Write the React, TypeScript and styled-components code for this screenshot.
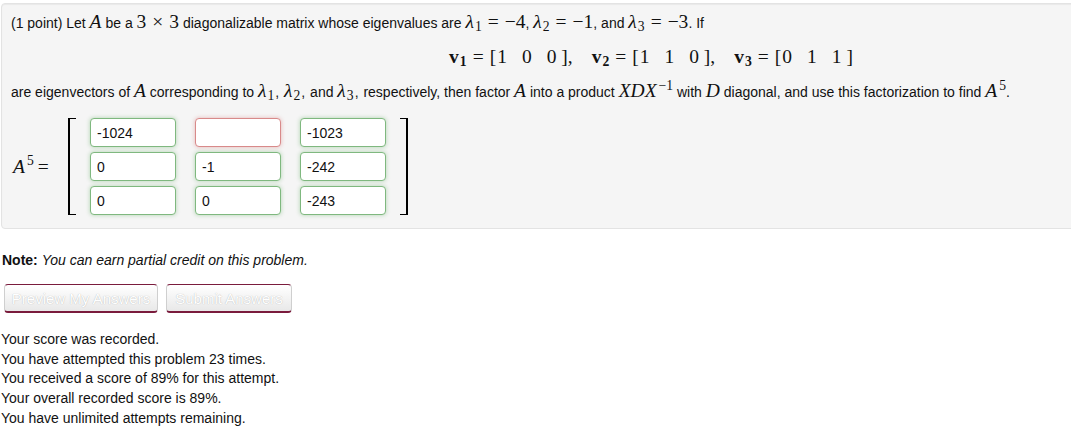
import React from "react";
import styled, { createGlobalStyle, css } from "styled-components";

const GlobalStyle = createGlobalStyle`
  html, body { margin: 0; padding: 0; background: #fff; overflow: hidden; }
  body { font-family: "Liberation Sans", Arial, sans-serif; font-size: 14px; color: #111; }
`;

const Page = styled.div`
  padding: 3px 0 0 1px;
  width: 1300px;
`;

const Panel = styled.div`
  box-sizing: border-box;
  width: 1300px;
  background: #f5f5f5;
  border: 1px solid #e3e3e3;
  border-radius: 4px;
  box-shadow: inset 0 1px 1px rgba(0, 0, 0, 0.05);
  padding: 8px 9px 13px 9px;
`;

const Para = styled.p<{ $top?: number }>`
  margin: ${(p) => p.$top ?? 0}px 0 0 0;
  height: 20px;
  line-height: 20px;
  white-space: nowrap;
`;

const Display = styled.div`
  margin-top: 15px;
  height: 22px;
  line-height: 22px;
  text-align: center;
  white-space: nowrap;
`;

const mathFont = css`
  font-family: "Liberation Serif", "Times New Roman", serif;
  font-size: 19.5px;
  line-height: 1;
`;

const Mi = styled.span`
  ${mathFont};
  font-style: italic;
`;

const Mn = styled.span`
  ${mathFont};
`;

const Mb = styled.span`
  ${mathFont};
  font-weight: bold;
`;

const Mo = styled.span<{ $gap?: number }>`
  ${mathFont};
  margin: 0 ${(p) => p.$gap ?? 6}px;
`;

const Sub = styled.span`
  font-size: 70%;
  line-height: 0;
  vertical-align: -0.25em;
  font-style: normal;
  margin-left: 1px;
`;

const Sup = styled.span`
  font-size: 70%;
  line-height: 0;
  vertical-align: 0.55em;
  font-style: normal;
  margin-left: 2px;
`;

const Entry = styled.span<{ $first?: boolean }>`
  ${mathFont};
  margin-left: ${(p) => (p.$first ? 1 : 15)}px;
`;

const Quad = styled.span`
  display: inline-block;
  width: 19px;
`;

const Comma = styled.span`
  margin-left: 1px;
  margin-right: 1px;
`;

const MatrixRow = styled.div`
  margin-top: 17px;
  display: flex;
  align-items: center;
`;

const Label = styled.div`
  ${mathFont};
  margin-left: 2px;
  width: 55px;
  white-space: nowrap;
`;

const Bracket = styled.div<{ $side: "left" | "right" }>`
  width: 6px;
  align-self: stretch;
  border: 0 solid #000;
  border-top-width: 1.5px;
  border-bottom-width: 1.5px;
  ${(p) => (p.$side === "left" ? "border-left-width: 2px;" : "border-right-width: 2px;")}
`;

const Grid = styled.div`
  display: grid;
  grid-template-columns: repeat(3, 86px);
  column-gap: 19px;
  row-gap: 5px;
  margin: 0 14px;
`;

const Cell = styled.input<{ $state: "ok" | "bad" }>`
  box-sizing: border-box;
  width: 86px;
  height: 29px;
  padding: 0 6px;
  font-family: "Liberation Sans", Arial, sans-serif;
  font-size: 14px;
  color: #111;
  background: #fff;
  border-radius: 4px;
  outline: none;
  border: 1px solid ${(p) => (p.$state === "ok" ? "#7fb87f" : "#d88a8a")};
  box-shadow: 0 0 4px
    ${(p) => (p.$state === "ok" ? "rgba(92, 170, 92, 0.45)" : "rgba(210, 90, 90, 0.4)")};
`;

const Note = styled.p`
  margin: 21px 0 0 1px;
  line-height: 20px;
`;

const NoteText = styled.i`
  font-style: italic;
`;

const Buttons = styled.div`
  margin: 14px 0 0 3px;
  display: flex;
  gap: 8px;
`;

const Button = styled.button<{ $w: number }>`
  box-sizing: border-box;
  width: ${(p) => p.$w}px;
  height: 29px;
  font-family: "Liberation Sans", Arial, sans-serif;
  font-size: 15px;
  color: #ffffff;
  text-shadow: 0 0 1px rgba(0, 0, 0, 0.3);
  background: linear-gradient(#ffffff, #e8e8e8);
  border: 1px solid #cfcfcf;
  border-top: 1px solid #7a1b3c;
  border-bottom: 2px solid #7a1b3c;
  border-radius: 4px;
  padding: 0;
`;

const Scores = styled.div`
  margin: 17px 0 0 0;
`;

const ScoreLine = styled.div`
  line-height: 19.7px;
`;

const cells: { v: string; s: "ok" | "bad" }[] = [
  { v: "-1024", s: "ok" },
  { v: "", s: "bad" },
  { v: "-1023", s: "ok" },
  { v: "0", s: "ok" },
  { v: "-1", s: "ok" },
  { v: "-242", s: "ok" },
  { v: "0", s: "ok" },
  { v: "0", s: "ok" },
  { v: "-243", s: "ok" },
];

const Vec = ({ n, e }: { n: string; e: string[] }) => (
  <>
    <Mb>
      v<Sub>{n}</Sub>
    </Mb>
    <Mo>=</Mo>
    <Mn>[</Mn>
    {e.map((x, i) => (
      <Entry key={i} $first={i === 0}>
        {x}
      </Entry>
    ))}
    <Mn>&nbsp;]</Mn>
  </>
);

const Lam = ({ n }: { n: string }) => (
  <Mi>
    λ<Sub>{n}</Sub>
  </Mi>
);

export default function App() {
  return (
    <>
      <GlobalStyle />
      <Page>
        <Panel>
          <Para $top={0}>
            (1 point) Let <Mi>A</Mi> be a <Mn>3</Mn>
            <Mo>×</Mo>
            <Mn>3</Mn> diagonalizable matrix whose eigenvalues are <Lam n="1" />
            <Mo>=</Mo>
            <Mn>−4</Mn>, <Lam n="2" />
            <Mo>=</Mo>
            <Mn>−1</Mn>, and <Lam n="3" />
            <Mo>=</Mo>
            <Mn>−3</Mn>. If
          </Para>
          <Display>
            <Vec n="1" e={["1", "0", "0"]} />
            <Mn>,</Mn>
            <Quad />
            <Vec n="2" e={["1", "1", "0"]} />
            <Mn>,</Mn>
            <Quad />
            <Vec n="3" e={["0", "1", "1"]} />
          </Display>
          <Para $top={12}>
            are eigenvectors of <Mi>A</Mi> corresponding to <Lam n="1" />
            <Comma>,</Comma> <Lam n="2" />
            <Comma>,</Comma> and <Lam n="3" />
            <Comma>,</Comma> respectively, then factor <Mi>A</Mi> into a product{" "}
            <Mi>
              XDX<Sup>−1</Sup>
            </Mi>{" "}
            with <Mi>D</Mi> diagonal, and use this factorization to find{" "}
            <Mi>
              A<Sup>5</Sup>
            </Mi>
            .
          </Para>
          <MatrixRow>
            <Label>
              <Mi>
                A<Sup>5</Sup>
              </Mi>
              <Mo $gap={4}>=</Mo>
            </Label>
            <Bracket $side="left" />
            <Grid>
              {cells.map((c, i) => (
                <Cell key={i} $state={c.s} defaultValue={c.v} readOnly />
              ))}
            </Grid>
            <Bracket $side="right" />
          </MatrixRow>
        </Panel>
        <Note>
          <b>Note:</b> <NoteText>You can earn partial credit on this problem.</NoteText>
        </Note>
        <Buttons>
          <Button $w={154}>Preview My Answers</Button>
          <Button $w={126}>Submit Answers</Button>
        </Buttons>
        <Scores>
          <ScoreLine>Your score was recorded.</ScoreLine>
          <ScoreLine>You have attempted this problem 23 times.</ScoreLine>
          <ScoreLine>You received a score of 89% for this attempt.</ScoreLine>
          <ScoreLine>Your overall recorded score is 89%.</ScoreLine>
          <ScoreLine>You have unlimited attempts remaining.</ScoreLine>
        </Scores>
      </Page>
    </>
  );
}
